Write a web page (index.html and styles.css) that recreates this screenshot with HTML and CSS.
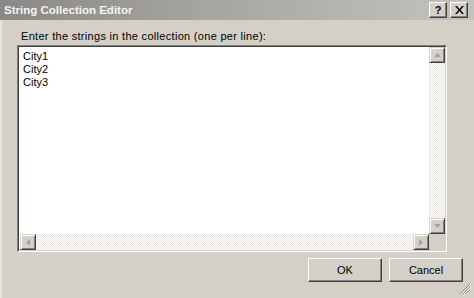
FILE: index.html
```html
<!DOCTYPE html>
<html lang="en">
  <head>
    <meta charset="UTF-8" />
    <title>String Collection Editor</title>
    <link rel="stylesheet" href="styles.css">
  </head>
  <body>
    <div class="window">
      <div class="titlebar">
        <span class="title">String Collection Editor</span>
        <div class="caption-buttons">
          <div class="cap-btn">?</div>
          <div class="cap-btn close">
            <svg width="9" height="8" viewBox="0 0 9 8"><path d="M0 0h2l2.5 3 2.5-3h2l-3.5 4 3.5 4h-2l-2.5-3-2.5 3h-2l3.5-4z" fill="#000"/></svg>
          </div>
        </div>
      </div>

      <div class="client">
        <div class="prompt">Enter the strings in the collection (one per line):</div>

        <div class="editbox">
          <div class="lines">
            <div>City1</div>
            <div>City2</div>
            <div>City3</div>
          </div>
          <div class="vscroll">
            <div class="arrow">
              <svg width="7" height="4" viewBox="0 0 7 4"><path d="M3.5 0L7 4H0z" fill="#a0a0a0"/></svg>
            </div>
            <div class="track"></div>
            <div class="arrow">
              <svg width="7" height="4" viewBox="0 0 7 4"><path d="M0 0h7L3.5 4z" fill="#a0a0a0"/></svg>
            </div>
          </div>
          <div class="hscroll">
            <div class="arrow">
              <svg width="4" height="7" viewBox="0 0 4 7"><path d="M0 3.5L4 0v7z" fill="#a0a0a0"/></svg>
            </div>
            <div class="track"></div>
            <div class="arrow">
              <svg width="4" height="7" viewBox="0 0 4 7"><path d="M0 0l4 3.5L0 7z" fill="#a0a0a0"/></svg>
            </div>
          </div>
          <div class="corner"></div>
        </div>

        <div class="buttons">
          <button class="btn">OK</button>
          <button class="btn">Cancel</button>
        </div>
      </div>

      <div class="grip">
        <svg width="12" height="12" viewBox="0 0 12 12">
          <path d="M11 1L1 11M11 4L4 11M11 7L7 11" stroke="#808080" stroke-width="1"/>
          <path d="M12 1L2 11M12 4L5 11M12 7L8 11" stroke="#fff" stroke-width="1"/>
        </svg>
      </div>
    </div>
  </body>
</html>
```

FILE: styles.css
```css
body {
  margin: 0;
  padding: 0;
  overflow: hidden;
  background: #d4d0c8;
  font-family: Tahoma, "Liberation Sans", sans-serif;
  font-size: 11px;
}

.window {
  position: relative;
  width: 474px;
  height: 298px;
  background: #d4d0c8;
  border-left: 2px solid #e6e3de;
  box-sizing: border-box;
  display: flex;
  flex-direction: column;
}

/* Title bar */
.titlebar {
  height: 20px;
  margin-left: -2px;
  background: linear-gradient(to right, #8a8884 0%, #a8a6a2 45%, #c4c2be 100%);
  display: flex;
  align-items: center;
  justify-content: space-between;
  padding: 0 6px 0 4px;
}

.title {
  color: #f4f4f4;
  font-weight: bold;
  font-size: 11.5px;
}

.caption-buttons {
  display: flex;
  gap: 3px;
}

.cap-btn {
  width: 16px;
  height: 14px;
  background: #d4d0c8;
  border: 1px solid;
  border-color: #fff #404040 #404040 #fff;
  box-shadow: inset -1px -1px 0 #808080;
  font-weight: bold;
  font-size: 11px;
  line-height: 14px;
  text-align: center;
  display: flex;
  align-items: center;
  justify-content: center;
}

/* Client area */
.client {
  flex: 1;
  display: flex;
  flex-direction: column;
  padding: 10px 27px 0 15px;
}

.prompt {
  color: #000;
  margin-bottom: 3px;
  padding-left: 4px;
  letter-spacing: 0.3px;
}

.editbox {
  height: 207px;
  border: 1px solid;
  border-color: #808080 #fff #fff #808080;
  box-shadow: inset 1px 1px 0 #404040, inset -1px -1px 0 #d4d0c8;
  background: #fff;
  display: grid;
  grid-template-columns: 1fr 16px;
  grid-template-rows: 1fr 16px;
  padding: 1px 1px 1px 2px;
  box-sizing: border-box;
}

.lines {
  padding: 3px 3px;
  line-height: 13px;
  color: #000;
}

.vscroll,
.hscroll {
  display: flex;
  background-color: #f6f5f2;
  background-image: repeating-conic-gradient(#fff 0 25%, #e8e6e0 0 50%);
  background-size: 2px 2px;
}

.vscroll {
  flex-direction: column;
}

.track {
  flex: 1;
}

.arrow {
  width: 16px;
  height: 16px;
  box-sizing: border-box;
  background: #d4d0c8;
  border: 1px solid;
  border-color: #d4d0c8 #404040 #404040 #d4d0c8;
  box-shadow: inset 1px 1px 0 #fff, inset -1px -1px 0 #808080;
  display: flex;
  align-items: center;
  justify-content: center;
}

.corner {
  background: #d4d0c8;
}

/* Buttons */
.buttons {
  display: flex;
  justify-content: flex-end;
  gap: 7px;
  margin-top: 6px;
  margin-right: -16px;
}

.btn {
  width: 74px;
  height: 24px;
  font-family: inherit;
  font-size: 11px;
  color: #000;
  background: #d4d0c8;
  border: 1px solid;
  border-color: #fff #404040 #404040 #fff;
  box-shadow: inset -1px -1px 0 #808080;
  padding: 0;
}

.grip {
  position: absolute;
  right: 3px;
  bottom: 3px;
  width: 12px;
  height: 12px;
}
```
